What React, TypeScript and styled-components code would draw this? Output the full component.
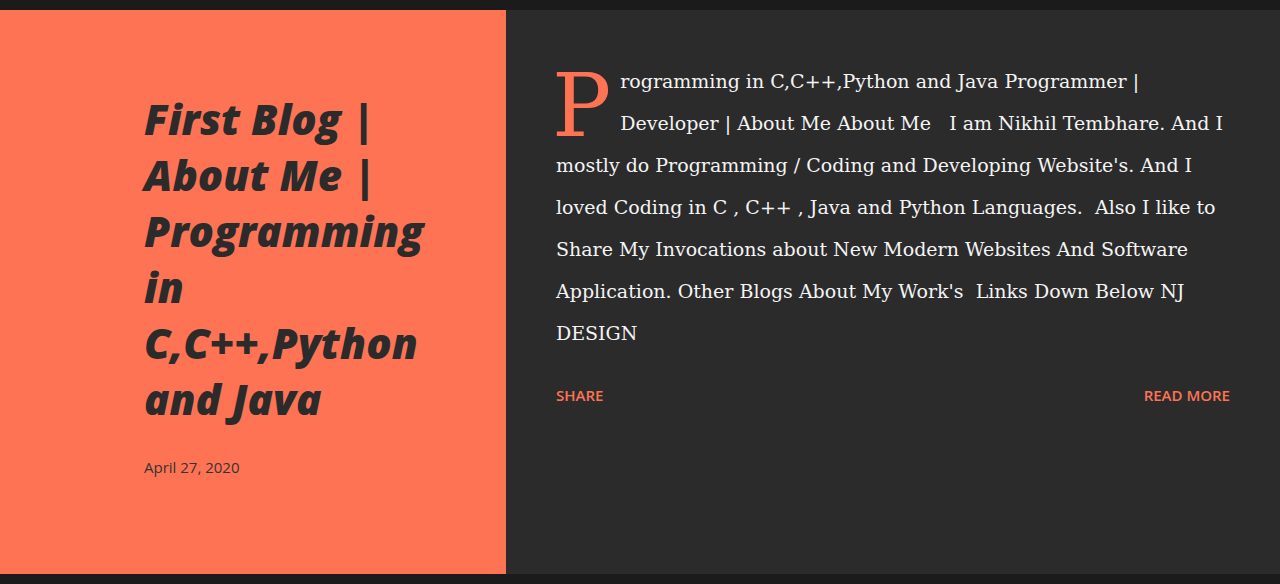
import React from "react";
import styled, { createGlobalStyle } from "styled-components";

const GlobalStyle = createGlobalStyle`
  html, body {
    margin: 0;
    padding: 0;
    background: #1b1b1b;
  }
`;

const Page = styled.div`
  padding: 10px 0;
  background: #1b1b1b;
`;

const Post = styled.article`
  display: grid;
  grid-template-columns: 506px 1fr;
  height: 564px;
`;

const TitlePane = styled.header`
  background: #ff7355;
  padding: 81px 50px 0 144px;
  box-sizing: border-box;
  color: #2b2b2b;
`;

const Title = styled.h1`
  margin: 0;
  width: 300px;
  font-family: "Open Sans", sans-serif;
  font-style: italic;
  font-weight: 800;
  font-size: 42px;
  line-height: 56px;
`;

const PostDate = styled.div`
  margin-top: 30px;
  font-family: "Open Sans", sans-serif;
  font-size: 15px;
  line-height: 20px;
  color: #333;
`;

const BodyPane = styled.div`
  background: #2b2b2b;
  padding: 50px 50px 0 50px;
  box-sizing: border-box;
`;

const Snippet = styled.p`
  margin: 0;
  font-family: "DejaVu Serif", serif;
  font-size: 19px;
  line-height: 42px;
  color: #f4f4f4;

  &::first-letter {
    float: left;
    font-size: 88px;
    line-height: 76px;
    margin: 8px 9px 0 -4px;
    color: #ff7355;
  }
`;

const Actions = styled.div`
  display: flex;
  justify-content: space-between;
  margin-top: 31px;
`;

const ActionLink = styled.a`
  font-family: "Open Sans", sans-serif;
  font-weight: 600;
  font-size: 15px;
  line-height: 20px;
  color: #ff7355;
  text-transform: uppercase;
  text-decoration: none;
`;

export default function App() {
  return (
    <>
      <GlobalStyle />
      <Page>
        <Post>
          <TitlePane>
            <Title>First Blog | About Me | Programming in C,C++,Python and Java</Title>
            <PostDate>April 27, 2020</PostDate>
          </TitlePane>
          <BodyPane>
            <Snippet>
              Programming in C,C++,Python and Java Programmer | Developer | About Me About Me &nbsp; I am
              Nikhil Tembhare. And I mostly do Programming / Coding and Developing Website's. And I loved
              Coding in C , C++ , Java and Python Languages.&nbsp; Also I like to Share My Invocations about
              New Modern Websites And Software Application. Other Blogs About My Work's&nbsp; Links Down Below
              NJ DESIGN
            </Snippet>
            <Actions>
              <ActionLink href="#">Share</ActionLink>
              <ActionLink href="#">Read more</ActionLink>
            </Actions>
          </BodyPane>
        </Post>
      </Page>
    </>
  );
}
